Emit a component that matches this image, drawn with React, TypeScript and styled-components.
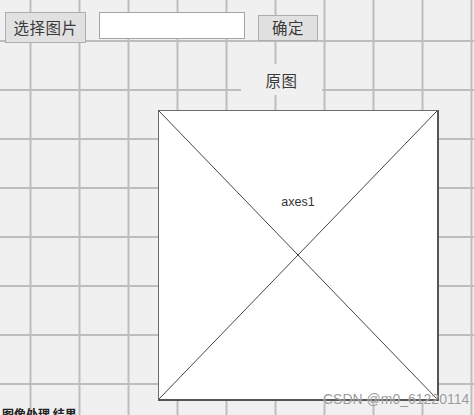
import React from "react";
import styled, { createGlobalStyle } from "styled-components";

const Global = createGlobalStyle`
  html, body { margin: 0; padding: 0; }
  body {
    width: 474px;
    height: 415px;
    overflow: hidden;
    background-color: #f0f0f0;
    font-family: "Noto Sans CJK SC", "Liberation Sans", sans-serif;
  }
`;

const Canvas = styled.div`
  position: relative;
  width: 474px;
  height: 415px;
  overflow: hidden;
  background-color: #f0f0f0;
  background-image:
    linear-gradient(to right, #bdbdbd 0, #bdbdbd 2px, transparent 2px),
    linear-gradient(to bottom, #bdbdbd 0, #bdbdbd 2px, transparent 2px);
  background-size: 49px 49px;
  background-position: 29.5px 40px;
  display: flex;
  flex-direction: column;
`;

const Toolbar = styled.div`
  display: flex;
  align-items: flex-start;
  padding: 12px 0 0 5px;
  height: 31px;
`;

const Button = styled.button<{ $w: number; $h: number; $mt?: number; $ml?: number }>`
  box-sizing: border-box;
  width: ${(p) => p.$w}px;
  height: ${(p) => p.$h}px;
  margin-top: ${(p) => p.$mt ?? 0}px;
  margin-left: ${(p) => p.$ml ?? 0}px;
  padding: 0;
  background: #e1e1e1;
  border: 1px solid #adadad;
  border-radius: 0;
  font-family: "Noto Sans CJK SC", sans-serif;
  font-size: 15.5px;
  color: #3a3a3a;
  line-height: 1;
  letter-spacing: 0.5px;
`;

const TextField = styled.div`
  box-sizing: border-box;
  width: 146px;
  height: 27px;
  margin-left: 13px;
  background: #ffffff;
  border: 1px solid #a4a4a4;
`;

const TitleRow = styled.div`
  display: flex;
  margin: 21px 0 0 241px;
`;

const Title = styled.div`
  width: 81px;
  height: 31px;
  background: #f0f0f0;
  display: flex;
  align-items: center;
  justify-content: center;
  font-size: 15.5px;
  color: #3a3a3a;
  letter-spacing: 0.5px;
`;

const Axes = styled.div`
  position: relative;
  box-sizing: border-box;
  width: 281px;
  height: 291px;
  margin: 15px 0 0 158px;
  background: #ffffff;
  border-top: 1px solid #6a6a6a;
  border-left: 1px solid #6a6a6a;
  border-right: 2px solid #555555;
  border-bottom: 2px solid #555555;
`;

const Cross = styled.svg`
  display: block;
  width: 100%;
  height: 100%;
`;

const AxesLabel = styled.span`
  position: absolute;
  left: 0;
  right: 0;
  top: 84px;
  text-align: center;
  font-family: "Liberation Sans", Arial, sans-serif;
  font-size: 12.5px;
  color: #333333;
`;

const Caption = styled.div`
  margin: 7px 0 0 2px;
  font-size: 12px;
  font-weight: 700;
  color: #222222;
  line-height: 12px;
  white-space: nowrap;
`;

const Watermark = styled.div`
  position: absolute;
  left: 323px;
  top: 391px;
  font-family: "Liberation Sans", Arial, sans-serif;
  font-size: 14px;
  color: rgba(120, 120, 120, 0.75);
  text-shadow: 0 0 1px rgba(255, 255, 255, 0.9);
  white-space: nowrap;
`;

export default function App() {
  return (
    <>
      <Global />
      <Canvas>
        <Toolbar>
          <Button $w={81} $h={31}>选择图片</Button>
          <TextField />
          <Button $w={60} $h={26} $mt={3} $ml={13}>确定</Button>
        </Toolbar>
        <TitleRow>
          <Title>原图</Title>
        </TitleRow>
        <Axes>
          <Cross viewBox="0 0 278 288" preserveAspectRatio="none">
            <line x1="0" y1="0" x2="278" y2="288" stroke="#444" strokeWidth="1" />
            <line x1="278" y1="0" x2="0" y2="288" stroke="#444" strokeWidth="1" />
          </Cross>
          <AxesLabel>axes1</AxesLabel>
        </Axes>
        <Caption>图像处理 结果</Caption>
        <Watermark>CSDN @m0_61220114</Watermark>
      </Canvas>
    </>
  );
}
